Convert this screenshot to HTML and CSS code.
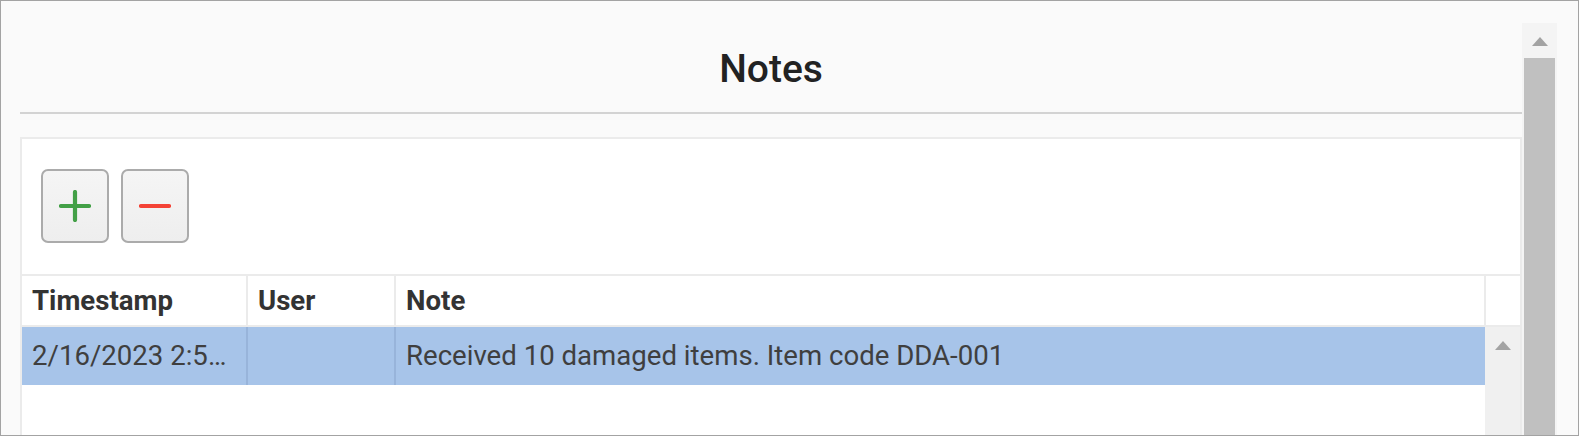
FILE: index.html
```html
<!DOCTYPE html>
<html>
<head>
<meta charset="utf-8">
<link rel="stylesheet" href="styles.css">
</head>
<body>
<div class="window">
  <div class="main">
    <div class="title-bar"><h1 class="title">Notes</h1></div>
    <div class="panel">
      <div class="toolbar">
        <button class="tool-btn" aria-label="Add">
          <svg width="32" height="32" viewBox="0 0 32 32"><path d="M16 2 V30 M2 16 H30" stroke="#43a047" stroke-width="4.2" stroke-linecap="round" fill="none"/></svg>
        </button>
        <button class="tool-btn" aria-label="Remove">
          <svg width="32" height="32" viewBox="0 0 32 32"><path d="M2 16 H30" stroke="#f44336" stroke-width="4.2" stroke-linecap="round" fill="none"/></svg>
        </button>
      </div>
      <div class="grid">
        <div class="grid-head">
          <div class="hcell c-ts">Timestamp</div>
          <div class="hcell c-user">User</div>
          <div class="hcell c-note">Note</div>
          <div class="hcell c-spacer"></div>
        </div>
        <div class="grid-body">
          <div class="rows">
            <div class="row selected">
              <div class="cell c-ts">2/16/2023 2:54:12 PM</div>
              <div class="cell c-user"></div>
              <div class="cell c-note last">Received 10 damaged items. Item code DDA-001</div>
            </div>
          </div>
          <div class="inner-scroll">
            <div class="arrow-box"><span class="arrow-up"></span></div>
          </div>
        </div>
      </div>
    </div>
  </div>
  <div class="vscroll">
    <div class="arrow-box"><span class="arrow-up"></span></div>
    <div class="thumb"></div>
  </div>
</div>
</body>
</html>
```

FILE: styles.css
```css
* { box-sizing: border-box; }
html, body { margin: 0; padding: 0; }
body { font-family: Roboto, "Liberation Sans", sans-serif; }

.window {
  width: 1579px;
  height: 436px;
  border: 1px solid #a3a3a3;
  background: #fafafa;
  display: flex;
  overflow: hidden;
}

.main {
  margin-left: 19px;
  width: 1502px;
  display: flex;
  flex-direction: column;
}

.title-bar {
  height: 113px;
  border-bottom: 2px solid #d3d3d3;
  padding-top: 46px;
  text-align: center;
}
.title {
  margin: 0;
  font-size: 39px;
  line-height: 44px;
  font-weight: 500;
  color: #222;
}

.panel {
  margin-top: 23px;
  flex: 1;
  background: #fff;
  border: 2px solid #ebebeb;
  border-bottom: none;
  display: flex;
  flex-direction: column;
}

.toolbar {
  display: flex;
  gap: 12px;
  padding: 30px 19px 31px;
}
.tool-btn {
  width: 68px;
  height: 74px;
  padding: 0;
  border: 2px solid #ababab;
  border-radius: 7px;
  background: linear-gradient(#f5f5f5, #eeeeee);
  display: flex;
  align-items: center;
  justify-content: center;
}

.grid {
  flex: 1;
  display: flex;
  flex-direction: column;
  border-top: 2px solid #ebebeb;
}
.grid-head {
  display: flex;
  height: 51px;
  border-bottom: 2px solid #ebebeb;
}
.hcell {
  padding: 0 10px;
  font-size: 27.6px;
  font-weight: 700;
  color: #333;
  display: flex;
  align-items: center;
  border-right: 2px solid #ebebeb;
}
.c-ts { width: 226px; flex: none; }
.c-user { width: 148px; flex: none; }
.c-note { width: 1090px; flex: none; }
.hcell.c-spacer { flex: 1; border-right: none; padding: 0; }

.grid-body {
  flex: 1;
  display: flex;
}
.rows { width: 1463px; }
.row {
  display: flex;
  height: 58px;
}
.row.selected { background: #a7c4e9; }
.cell {
  padding: 0 10px;
  font-size: 27.6px;
  color: #3f3f3f;
  line-height: 58px;
  white-space: nowrap;
  overflow: hidden;
  text-overflow: ellipsis;
  border-right: 2px solid #98b4da;
}
.cell.last { width: 1089px; border-right: none; }

.inner-scroll {
  flex: 1;
  background: #f0f0f0;
}

.arrow-box {
  height: 35px;
  display: flex;
  justify-content: center;
  padding-top: 14px;
}
.arrow-up {
  width: 0;
  height: 0;
  border-left: 8.5px solid transparent;
  border-right: 8.5px solid transparent;
  border-bottom: 9px solid #a3a3a3;
}

.vscroll {
  margin-top: 22px;
  width: 35px;
  background: #f4f4f4;
  display: flex;
  flex-direction: column;
}
.thumb {
  flex: 1;
  margin: 0 2px;
  background: #c0c0c0;
}
```
